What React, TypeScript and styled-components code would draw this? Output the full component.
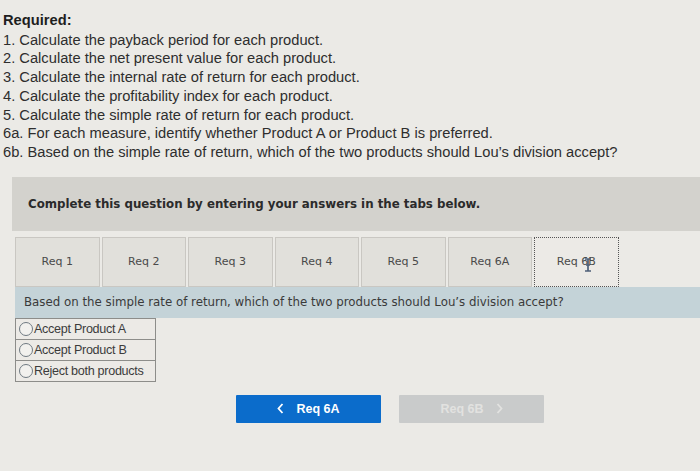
import React from "react";
import styled, { createGlobalStyle } from "styled-components";

const GlobalStyle = createGlobalStyle`
  html, body {
    margin: 0;
    padding: 0;
    background: #ebeae6;
  }
`;

const Page = styled.div`
  width: 700px;
  height: 471px;
  overflow: hidden;
  background: #ebeae6;
  font-family: "Liberation Sans", Arial, sans-serif;
  color: #2e2e2e;
`;

const Required = styled.div`
  padding: 11px 0 0 3px;
  font-size: 14.7px;
  line-height: 18.7px;
`;

const RequiredTitle = styled.div`
  font-weight: bold;
  color: #1e1e1e;
  margin-bottom: 1px;
`;

const Line = styled.div`
  white-space: nowrap;
`;

const Band = styled.div`
  margin: 15px 0 0 12px;
  height: 54px;
  background: #d3d2cd;
  display: flex;
  align-items: center;
  padding-left: 16px;
  font-family: "DejaVu Sans", Verdana, sans-serif;
  font-weight: bold;
  font-size: 11.8px;
  color: #2b2b2b;
`;

const Content = styled.div`
  padding: 6px 0 0 15px;
`;

const Tabs = styled.div`
  display: flex;
  gap: 2px;
`;

const Tab = styled.div<{ $active?: boolean }>`
  position: relative;
  width: 84.5px;
  height: 50px;
  box-sizing: border-box;
  display: flex;
  align-items: center;
  justify-content: center;
  padding-bottom: 1px;
  font-family: "DejaVu Sans", Verdana, sans-serif;
  font-size: 11px;
  color: #4a4a4a;
  background: ${(p) => (p.$active ? "#eceae6" : "#e1e0db")};
  border: ${(p) => (p.$active ? "1px dotted #555" : "1px solid #c9c7c2")};
`;

const Cursor = styled.svg`
  position: absolute;
  left: 49px;
  top: 20px;
`;

const InfoBar = styled.div`
  height: 31px;
  background: #c4d3d8;
  display: flex;
  align-items: center;
  padding-left: 9px;
  font-family: "DejaVu Sans", Verdana, sans-serif;
  font-size: 11.8px;
  color: #3a3a3a;
  white-space: nowrap;
`;

const Options = styled.div`
  width: 141px;
  display: flex;
  flex-direction: column;
`;

const Option = styled.label`
  display: flex;
  align-items: center;
  height: 22px;
  box-sizing: border-box;
  border: 1px solid #8d8d8a;
  margin-top: -1px;
  padding-left: 3px;
  font-size: 12.6px;
  letter-spacing: -0.3px;
  color: #3c3c3c;
  background: #eceae6;
  &:first-child {
    margin-top: 0;
  }
`;

const Radio = styled.span`
  width: 14px;
  height: 14px;
  border-radius: 50%;
  border: 1.5px solid #6f7a82;
  box-sizing: border-box;
  margin-right: 1px;
  background: #f2f1ee;
`;

const NavRow = styled.div`
  display: flex;
  gap: 18px;
  padding: 13px 0 0 221px;
`;

const NavButton = styled.div<{ $disabled?: boolean }>`
  width: 145px;
  height: 28px;
  box-sizing: border-box;
  display: flex;
  align-items: center;
  justify-content: center;
  gap: 12px;
  font-weight: bold;
  font-size: 12.5px;
  border-radius: 1px;
  color: ${(p) => (p.$disabled ? "#e2e2e0" : "#ffffff")};
  background: ${(p) => (p.$disabled ? "#c9cbcb" : "#0b6ccb")};
`;

const Chevron = ({ dir }: { dir: "left" | "right" }) => (
  <svg width="7" height="11" viewBox="0 0 7 11">
    <path
      d={dir === "left" ? "M5.5 1 L1.5 5.5 L5.5 10" : "M1.5 1 L5.5 5.5 L1.5 10"}
      stroke="currentColor"
      strokeWidth="1.8"
      fill="none"
    />
  </svg>
);

const tabs = ["Req 1", "Req 2", "Req 3", "Req 4", "Req 5", "Req 6A", "Req 6B"];
const options = ["Accept Product A", "Accept Product B", "Reject both products"];
const lines = [
  "1. Calculate the payback period for each product.",
  "2. Calculate the net present value for each product.",
  "3. Calculate the internal rate of return for each product.",
  "4. Calculate the profitability index for each product.",
  "5. Calculate the simple rate of return for each product.",
  "6a. For each measure, identify whether Product A or Product B is preferred.",
  "6b. Based on the simple rate of return, which of the two products should Lou\u2019s division accept?",
];

export default function App() {
  return (
    <Page>
      <GlobalStyle />
      <Required>
        <RequiredTitle>Required:</RequiredTitle>
        {lines.map((l) => (
          <Line key={l}>{l}</Line>
        ))}
      </Required>
      <Band>Complete this question by entering your answers in the tabs below.</Band>
      <Content>
        <Tabs>
          {tabs.map((t, i) => (
            <Tab key={t} $active={i === tabs.length - 1}>
              {t}
              {i === tabs.length - 1 && (
                <Cursor width="8" height="14" viewBox="0 0 8 14">
                  <path
                    d="M1 1 H7 M4 1 V13 M1 13 H7 M2 7 H6"
                    stroke="#4d5f78"
                    strokeWidth="1.7"
                    fill="none"
                  />
                </Cursor>
              )}
            </Tab>
          ))}
        </Tabs>
        <InfoBar>
          Based on the simple rate of return, which of the two products should Lou’s division accept?
        </InfoBar>
        <Options>
          {options.map((o) => (
            <Option key={o}>
              <Radio />
              {o}
            </Option>
          ))}
        </Options>
        <NavRow>
          <NavButton>
            <Chevron dir="left" />
            <span>Req 6A</span>
          </NavButton>
          <NavButton $disabled>
            <span>Req 6B</span>
            <Chevron dir="right" />
          </NavButton>
        </NavRow>
      </Content>
    </Page>
  );
}
